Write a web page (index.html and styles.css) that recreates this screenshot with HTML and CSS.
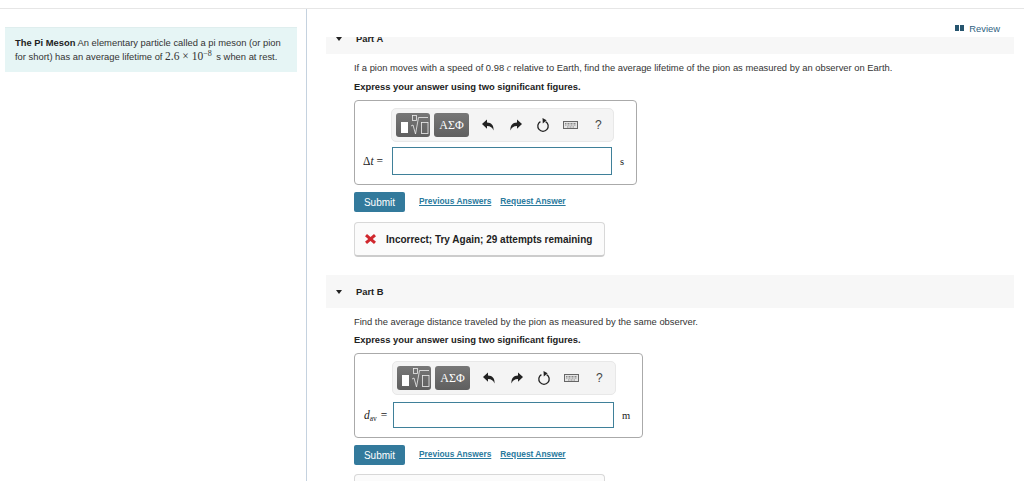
FILE: index.html
```html
<!DOCTYPE html>
<html lang="en">

<head>
    <meta charset="UTF-8">
    <meta name="viewport" content="width=device-width, initial-scale=1.0">
    <title>The Pi Meson</title>
    <link rel="stylesheet" href="styles.css">
</head>

<body>
    <svg class="defs" width="0" height="0" aria-hidden="true">
        <symbol id="undo" viewBox="0 0 14 14">
            <path d="M1 6 6 1.500V4.500C10.500 4.500 13 7.500 12.500 12.500 11.500 9.500 9.500 8 6 8V10.800Z" />
        </symbol>
        <symbol id="redo" viewBox="0 0 14 14">
            <path d="M13 6 8 1.500V4.500C3.500 4.500 1 7.500 1.500 12.500 2.500 9.500 4.500 8 8 8V10.800Z" />
        </symbol>
        <symbol id="reset" viewBox="0 0 14 14">
            <path class="stroke" d="M4.400 3.600A5.200 5.200 0 1 0 9.600 3.600" />
            <path d="M6.500 0 6.800 5.600 10.600 2.200Z" />
        </symbol>
        <symbol id="keys" viewBox="0 0 15 10">
            <rect class="key-frame" x="0.500" y="1.500" width="14" height="7" />
            <path class="key-rows" d="M2 3.500H13M2 5H13M4 7H11" />
        </symbol>
        <symbol id="root" viewBox="0 0 34 23">
            <rect class="white-fill" x="5" y="8" width="7" height="11" />
            <rect class="white-line" x="16.500" y="1.500" width="4" height="5" />
            <path class="white-line" d="M15 12 17 11 19.500 20 22.500 3.500H32" />
            <rect class="white-line" x="25.500" y="8.500" width="6.500" height="11" />
        </symbol>
    </svg>

    <div class="page">
        <aside class="sidebar">
            <div class="intro">
                <div class="intro-line"><b>The Pi Meson</b> An elementary particle called a pi meson (or pion</div>
                <div class="intro-line">for short) has an average lifetime of
                    <span class="math">2.6 &times; 10</span><span class="exponent">&minus;8</span> s when at rest.</div>
            </div>
        </aside>

        <main class="content">
            <div class="review">
                <svg class="review-icon" width="9" height="6" viewBox="0 0 9 6">
                    <path d="M0 0H4V6H0ZM5 0H9V6H5Z" />
                </svg>
                <span>Review</span>
            </div>

            <section class="part part-a">
                <div class="part-head part-head-cut">
                    <span class="caret"></span>
                    <span class="part-title">Part A</span>
                </div>
                <div class="part-body">
                    <p class="question">If a pion moves with a speed of 0.98 <i class="math">c</i> relative to Earth, find the average lifetime of the pion as measured by an observer on Earth.</p>
                    <p class="hint">Express your answer using two significant figures.</p>

                    <div class="answer-box">
                        <div class="toolbar">
                            <span class="tool-btn tool-root"><svg width="34" height="23"><use href="#root" /></svg></span>
                            <span class="tool-btn tool-greek">&Alpha;&Sigma;&Phi;</span>
                            <svg class="tool-icon tool-undo" width="14" height="14"><use href="#undo" /></svg>
                            <svg class="tool-icon tool-redo" width="14" height="14"><use href="#redo" /></svg>
                            <svg class="tool-icon tool-reset" width="14" height="14"><use href="#reset" /></svg>
                            <svg class="tool-icon tool-keys" width="15" height="10"><use href="#keys" /></svg>
                            <span class="tool-help">?</span>
                        </div>
                        <div class="answer-row">
                            <span class="answer-label math">&Delta;<i>t</i> =</span>
                            <input class="answer-input" type="text">
                            <span class="unit">s</span>
                        </div>
                    </div>

                    <div class="actions">
                        <button class="submit" type="button">Submit</button>
                        <a class="action-link" href="#">Previous Answers</a>
                        <a class="action-link" href="#">Request Answer</a>
                    </div>

                    <div class="feedback">
                        <svg class="feedback-x" width="11" height="10" viewBox="0 0 11 10">
                            <path d="M0 2.300 2 0 5.500 3 9 0 11 2.300 7.800 5 11 7.700 9 10 5.500 7 2 10 0 7.700 3.200 5Z" />
                        </svg>
                        <span>Incorrect; Try Again; 29 attempts remaining</span>
                    </div>
                </div>
            </section>

            <section class="part part-b">
                <div class="part-head">
                    <span class="caret"></span>
                    <span class="part-title">Part B</span>
                </div>
                <div class="part-body">
                    <p class="question">Find the average distance traveled by the pion as measured by the same observer.</p>
                    <p class="hint">Express your answer using two significant figures.</p>

                    <div class="answer-box answer-box-wide">
                        <div class="toolbar">
                            <span class="tool-btn tool-root"><svg width="34" height="23"><use href="#root" /></svg></span>
                            <span class="tool-btn tool-greek">&Alpha;&Sigma;&Phi;</span>
                            <svg class="tool-icon tool-undo" width="14" height="14"><use href="#undo" /></svg>
                            <svg class="tool-icon tool-redo" width="14" height="14"><use href="#redo" /></svg>
                            <svg class="tool-icon tool-reset" width="14" height="14"><use href="#reset" /></svg>
                            <svg class="tool-icon tool-keys" width="15" height="10"><use href="#keys" /></svg>
                            <span class="tool-help">?</span>
                        </div>
                        <div class="answer-row">
                            <span class="answer-label math"><i>d</i><span class="subscript">av</span> =</span>
                            <input class="answer-input" type="text">
                            <span class="unit">m</span>
                        </div>
                    </div>

                    <div class="actions">
                        <button class="submit" type="button">Submit</button>
                        <a class="action-link" href="#">Previous Answers</a>
                        <a class="action-link" href="#">Request Answer</a>
                    </div>

                    <div class="feedback feedback-empty"></div>
                </div>
            </section>
        </main>
    </div>
</body>

</html>
```

FILE: styles.css
```css
html,
body {
    height: 481px;
    overflow: hidden;
}

body {
    font-family: "Liberation Sans", Arial, sans-serif;
    font-size: 9.400px;
    margin: 0;
    padding-top: 8px;
    box-sizing: border-box;
    background-color: #fff;
    color: #333;
}

.defs {
    position: absolute;
}

.math {
    font-family: "Liberation Serif", "Times New Roman", serif;
}

.page {
    display: flex;
    height: 473px;
    overflow: hidden;
    border-top: 1px solid #e6e6e6;
}

/* left panel */
.sidebar {
    width: 307px;
    flex: none;
    box-sizing: border-box;
    padding: 18px 9px 0 5px;
    border-right: 1px solid #c5d2df;
}

.intro {
    height: 45px;
    box-sizing: border-box;
    padding: 8px 0 0 10px;
    background-color: #e6f5f5;
    border-top: 1px solid #dfeeee;
    color: #333;
}

.intro-line {
    height: 13.500px;
    line-height: 13.500px;
    white-space: nowrap;
}

.intro b {
    color: #222;
}

.intro .math {
    font-size: 11.500px;
}

.exponent {
    font-family: "Liberation Serif", "Times New Roman", serif;
    font-size: 8px;
    line-height: 0;
    vertical-align: 4px;
    margin-right: 2px;
}

/* right side */
.content {
    flex: 1;
    min-width: 0;
    padding: 0 10px 0 19px;
}

.review {
    display: flex;
    justify-content: flex-end;
    align-items: center;
    gap: 5px;
    height: 28px;
    box-sizing: border-box;
    padding: 10px 14px 0 0;
    color: #2f5f7f;
}

.review-icon {
    fill: #26556f;
}

.part-head {
    display: flex;
    align-items: center;
    height: 33px;
    background-color: #f7f7f7;
    overflow: hidden;
}

.part-head-cut {
    height: 17px;
}

.part-head-cut .part-title {
    margin-top: -14px;
}

.part-head-cut .caret {
    margin-top: -13px;
}

.caret {
    width: 0;
    height: 0;
    margin-left: 10px;
    border-left: 3.500px solid transparent;
    border-right: 3.500px solid transparent;
    border-top: 4px solid #222;
}

.part-title {
    margin-left: 14px;
    font-weight: bold;
    color: #222;
}

.part-body {
    padding-left: 28px;
}

.question {
    margin: 0;
    padding-top: 8px;
    line-height: 12px;
    white-space: nowrap;
}

.hint {
    margin: 0;
    padding-top: 7px;
    line-height: 12px;
    font-weight: bold;
    color: #222;
}

.part-b .hint {
    padding-top: 6px;
}

.answer-box {
    width: 283px;
    height: 85px;
    box-sizing: border-box;
    margin-top: 7px;
    padding: 7px 0 0 36px;
    border: 1px solid #aaa;
    border-radius: 4px;
}

.answer-box-wide {
    width: 289px;
    padding-left: 37px;
}

.toolbar {
    display: flex;
    align-items: center;
    width: 223px;
    height: 34px;
    box-sizing: border-box;
    padding-left: 4px;
    border: 1px solid #e8e8e8;
    border-radius: 5px;
    background-color: #f4f4f4;
}

.answer-box-wide .toolbar {
    width: 224px;
}

.tool-btn {
    display: flex;
    align-items: center;
    justify-content: center;
    height: 24px;
    border-radius: 3px;
    background: linear-gradient(#777, #5f5f5f);
    color: #fff;
}

.tool-root {
    width: 34px;
}

.tool-greek {
    width: 35px;
    margin-left: 4px;
    font-family: "Liberation Serif", serif;
    font-size: 12px;
}

.tool-icon {
    fill: #222;
    flex: none;
}

.tool-undo {
    margin-left: 12px;
}

.tool-redo {
    margin-left: 14px;
}

.tool-reset {
    margin-left: 13px;
}

.tool-keys {
    margin-left: 13px;
}

.stroke {
    fill: none;
    stroke: #222;
    stroke-width: 1.300;
}

.key-frame {
    fill: #e4e4e4;
    stroke: #666;
}

.key-rows {
    fill: none;
    stroke: #888;
    stroke-dasharray: 1 0.500;
}

.white-fill {
    fill: #fff;
}

.white-line {
    fill: none;
    stroke: #eee;
    stroke-width: 0.800;
}

.tool-help {
    margin-left: 17px;
    font-size: 12px;
    color: #444;
}

.answer-row {
    display: flex;
    align-items: center;
    margin-top: 5px;
    margin-left: -28px;
}

.answer-box-wide .answer-row {
    margin-top: 7px;
}

.answer-label {
    width: 29px;
    flex: none;
    font-size: 11.500px;
    white-space: nowrap;
    color: #222;
}

.subscript {
    font-size: 7.500px;
    margin-right: 1px;
    position: relative;
    top: 2px;
}

.answer-input {
    width: 220px;
    height: 28px;
    box-sizing: border-box;
    padding: 0;
    border: 1px solid #3f8099;
    background-color: #fff;
}

.answer-box-wide .answer-input {
    width: 221px;
    height: 26px;
}

.unit {
    margin-left: 8px;
    font-family: "Liberation Serif", serif;
    font-size: 10.500px;
    color: #222;
}

.actions {
    display: flex;
    align-items: center;
    margin-top: 7px;
    height: 20px;
}

.submit {
    width: 51px;
    height: 20px;
    padding: 0;
    border: none;
    border-radius: 2px;
    background-color: #337a9c;
    color: #fff;
    font-family: "Liberation Sans", Arial, sans-serif;
    font-size: 10px;
}

.action-link {
    margin-left: 9px;
    margin-top: -2px;
    color: #2a7a9e;
    font-weight: bold;
    font-size: 8.400px;
}

.submit + .action-link {
    margin-left: 14px;
}

.feedback {
    display: flex;
    align-items: center;
    gap: 10px;
    width: 251px;
    height: 35px;
    box-sizing: border-box;
    margin-top: 10px;
    padding-left: 10px;
    border: 1px solid #d8d8d8;
    border-bottom: 2px solid #ccc;
    border-radius: 4px;
    background-color: #fbfbfb;
    font-size: 10px;
    font-weight: bold;
    color: #222;
}

.feedback-x {
    fill: #d0282e;
    flex: none;
}

.feedback-empty {
    height: 7px;
    border-bottom: none;
    border-radius: 4px 4px 0 0;
    margin-top: 9px;
}

.part-b {
    margin-top: 18px;
}
```
